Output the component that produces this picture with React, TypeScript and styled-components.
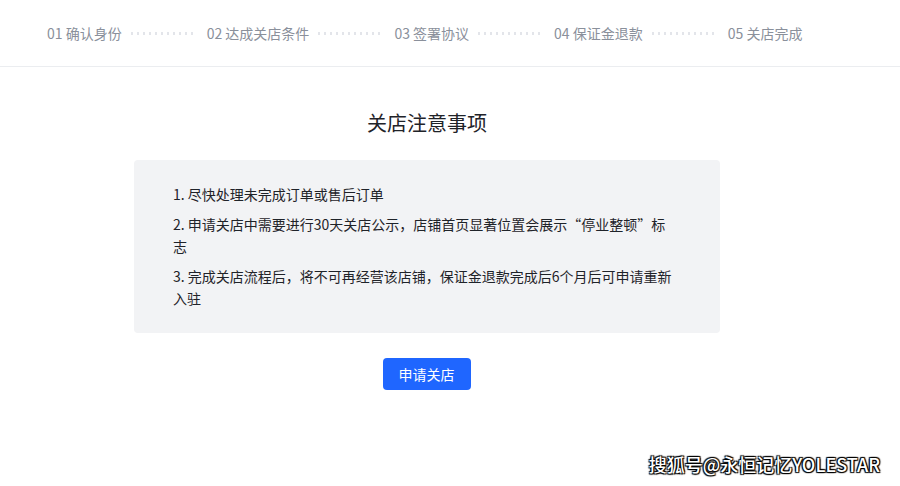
import { createGlobalStyle, styled } from 'styled-components'

const GlobalStyle = createGlobalStyle`
  html, body {
    margin: 0;
    padding: 0;
    background: #ffffff;
  }
  body {
    font-family: "Microsoft YaHei", "Noto Sans CJK SC", "Noto Sans", sans-serif;
  }
`

const steps = ['01 确认身份', '02 达成关店条件', '03 签署协议', '04 保证金退款', '05 关店完成']

const notes = [
  '1. 尽快处理未完成订单或售后订单',
  '2. 申请关店中需要进行30天关店公示，店铺首页显著位置会展示“停业整顿”标志',
  '3. 完成关店流程后，将不可再经营该店铺，保证金退款完成后6个月后可申请重新入驻'
]

export default function App() {
  return (
    <Page>
      <GlobalStyle />
      <StepBar>
        {steps.map((step, i) => (
          <StepGroup key={step}>
            <Step>{step}</Step>
            {i < steps.length - 1 && <Dots />}
          </StepGroup>
        ))}
      </StepBar>
      <Main>
        <Title>关店注意事项</Title>
        <NoticeBox>
          {notes.map(note => (
            <Note key={note}>{note}</Note>
          ))}
        </NoticeBox>
        <ApplyButton type="button">申请关店</ApplyButton>
      </Main>
      <Watermark>搜狐号@永恒记忆YOLESTAR</Watermark>
    </Page>
  )
}

const Page = styled.div`
  position: relative;
  width: 900px;
  height: 486px;
  overflow: hidden;
  background: #ffffff;
`
const StepBar = styled.div`
  display: flex;
  align-items: center;
  height: 66px;
  padding-left: 47px;
  border-bottom: 1px solid #ebedf0;
`
const StepGroup = styled.div`
  display: flex;
  align-items: center;
`
const Step = styled.span`
  font-size: 14px;
  line-height: 20px;
  color: #8a909b;
  white-space: nowrap;
`
const Dots = styled.span`
  display: block;
  width: 66px;
  height: 3px;
  margin: 0 10px 0 9px;
  background-image: linear-gradient(to right, #e3e5ea 2px, transparent 2px);
  background-size: 6px 3px;
`
const Main = styled.div`
  display: flex;
  flex-direction: column;
  align-items: center;
  padding-top: 41px;
`
const Title = styled.h2`
  margin: 0;
  font-size: 20px;
  font-weight: 400;
  line-height: 30px;
  color: #1f2329;
  transform: translateX(-23px);
`
const NoticeBox = styled.div`
  box-sizing: border-box;
  width: 586px;
  margin-top: 22px;
  margin-right: 46px;
  padding: 23px 39px 24px;
  background: #f2f3f5;
  border-radius: 4px;
`
const Note = styled.p`
  max-width: 502px;
  margin: 0 0 8px;
  font-size: 14px;
  line-height: 22px;
  color: #1f2329;

  &:last-child {
    margin-bottom: 0;
  }
`
const ApplyButton = styled.button`
  width: 88px;
  height: 32px;
  margin-top: 25px;
  margin-right: 47px;
  padding: 0;
  border: none;
  border-radius: 4px;
  background: #1f66ff;
  color: #ffffff;
  font-family: inherit;
  font-size: 14px;
  cursor: pointer;
`
const Watermark = styled.div`
  position: absolute;
  right: 20px;
  bottom: 9px;
  font-size: 18px;
  font-weight: 500;
  color: #ffffff;
  text-shadow: 0 0 1px #000, 1px 1px 1px #000, -1px -1px 1px #000, 1px -1px 1px #000, -1px 1px 1px #000;
`
